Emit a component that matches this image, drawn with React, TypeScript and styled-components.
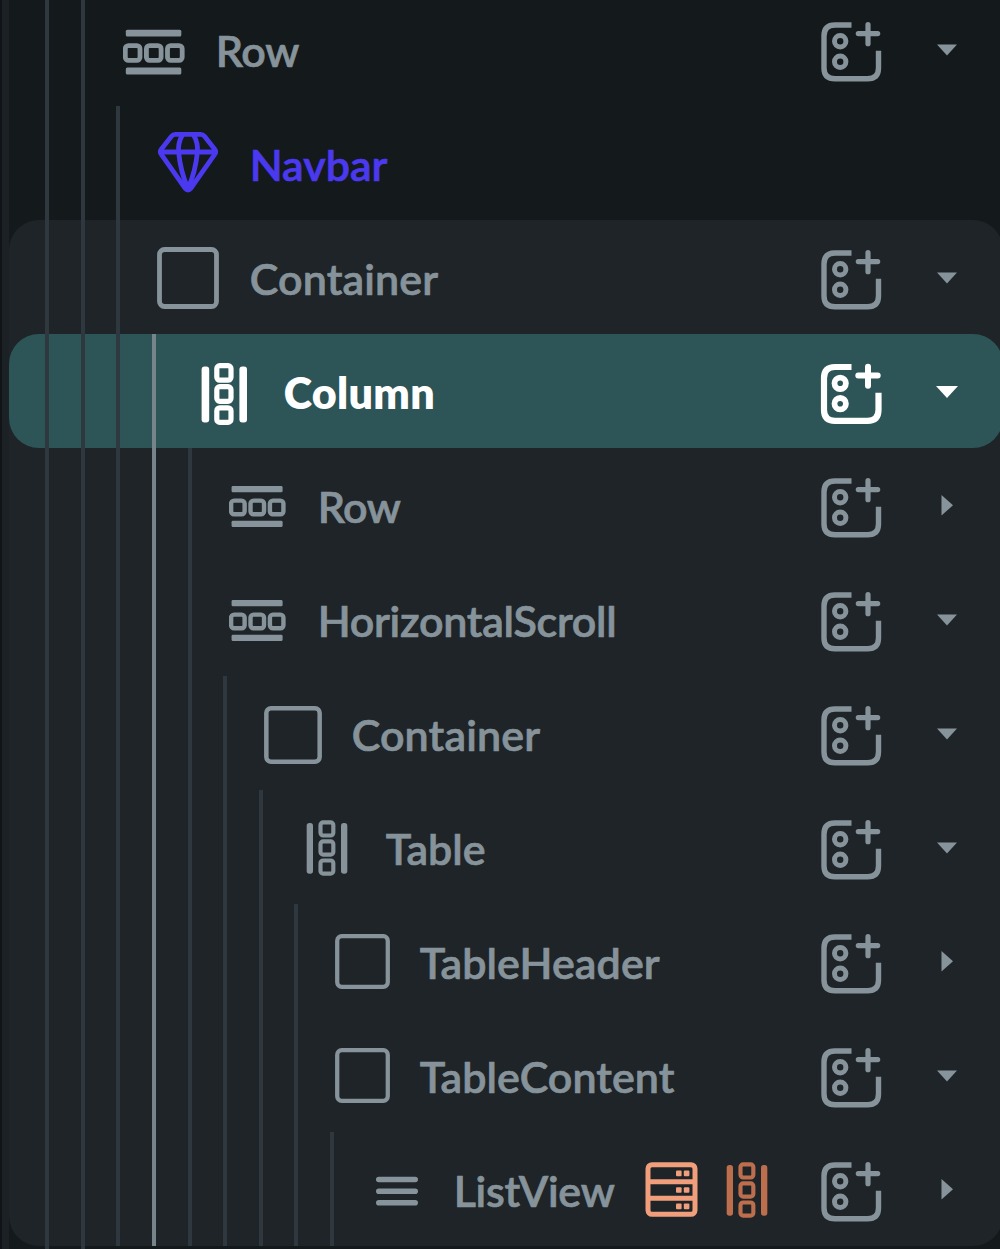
import React from "react";
import styled, { createGlobalStyle } from "styled-components";

const GlobalStyle = createGlobalStyle`
  * { box-sizing: border-box; }
  body { margin: 0; background: #14191b; }
`;

const MUTED = "#87939a";
const GUIDE_PITCH = 35.65;

const Panel = styled.main`
  width: 1000px;
  height: 1249px;
  overflow: hidden;
  background: #14191b;
  border-left: 2px solid #101416;
  display: flex;
`;

const Gutter = styled.div`
  flex: 0 0 7px;
  background: #1b2124;
`;

const Tree = styled.div`
  flex: 0 0 994px;
  display: flex;
  flex-direction: column;
  margin-top: -8px;
`;

const Group = styled.section`
  display: flex;
  flex-direction: column;
  background: #1e2427;
  border-radius: 30px;
`;

const RowBox = styled.div<{ $selected?: boolean }>`
  display: flex;
  align-items: center;
  height: 114px;
  flex: none;
  border-radius: 30px;
  color: ${(p) => (p.$selected ? "#ffffff" : MUTED)};
  background: ${(p) => (p.$selected ? "#2d5557" : "transparent")};
`;

const Guides = styled.div`
  display: flex;
  align-self: stretch;
  flex: none;
  padding-left: 36px;
  gap: ${GUIDE_PITCH - 4}px;
`;

const Guide = styled.span<{ $bright?: boolean }>`
  flex: 0 0 4px;
  background: ${(p) => (p.$bright ? "#75858a" : "#2e383e")};
`;

const IconSlot = styled.div<{ $width: number; $shift: number }>`
  width: ${(p) => p.$width}px;
  flex: none;
  display: flex;
  justify-content: center;
  padding-top: ${(p) => Math.max(0, p.$shift * 2)}px;
  padding-bottom: ${(p) => Math.max(0, -p.$shift * 2)}px;
  svg { display: block; flex: none; }
`;

const Label = styled.span<{ $gap: number; $bold?: boolean; $accent?: boolean; $tracking: number }>`
  margin-left: ${(p) => p.$gap}px;
  padding-top: 4px;
  font-family: Lato, "Open Sans", sans-serif;
  font-size: 43px;
  line-height: 52px;
  font-weight: ${(p) => (p.$bold ? 800 : 600)};
  letter-spacing: ${(p) => p.$tracking}px;
  color: ${(p) => (p.$accent ? "#4b39ef" : "inherit")};
  -webkit-text-stroke: ${(p) => (p.$bold ? "0" : "0.7px")} currentColor;
  white-space: nowrap;
`;

const Actions = styled.div`
  margin-left: auto;
  display: flex;
  align-items: center;
  flex: none;
  padding-right: 41.5px;
  gap: 50px;
  svg { display: block; }
`;

const AddButton = styled.button`
  border: 0;
  padding: 6px 0 0;
  background: none;
  color: inherit;
`;

const Toggle = styled.button`
  border: 0;
  padding: 1px 0 0;
  width: 30px;
  background: none;
  color: inherit;
  display: flex;
  justify-content: center;
`;

const Badges = styled.div`
  display: flex;
  align-items: center;
  flex: none;
  gap: 21px;
  margin-right: 45px;
  margin-left: auto;
  padding-top: 1px;
  svg { display: block; }
  & + ${Actions} { margin-left: 0; }
`;

const Footer = styled.div`
  display: flex;
  height: 12px;
`;

type IconProps = { size: number; heavy?: boolean; color?: string };

const RowIcon = ({ size }: IconProps) => (
  <svg width={size} height={size} viewBox="0 0 62 62" fill="none" stroke="currentColor">
    <g fill="currentColor" stroke="none">
      <rect x="2.8" y="8.8" width="55.5" height="6.8" rx="1.5" />
      <rect x="2.8" y="46.6" width="55.5" height="6.8" rx="1.5" />
    </g>
    {[2.3, 23.4, 44.5].map((x) => (
      <rect key={x} x={x} y="24.6" width="14.7" height="14.8" rx="3.2" strokeWidth="4.8" />
    ))}
  </svg>
);

const ColumnIcon = ({ size, heavy, color = "currentColor" }: IconProps) => (
  <svg width={size} height={size} viewBox="0 0 62 62" fill="none" stroke={color}>
    <g fill={color} stroke="none">
      <rect x={heavy ? 8.6 : 8.5} y="3.4" width={heavy ? 7.6 : 7} height="56" rx="3" />
      <rect x={heavy ? 46.4 : 46.5} y="3.4" width={heavy ? 7.6 : 7} height="56" rx="3" />
    </g>
    {[2.6, 23.7, 44.8].map((y) => (
      <rect key={y} x="23.8" y={y} width="14.2" height="14.6" rx="3" strokeWidth={heavy ? 5.2 : 4.6} />
    ))}
  </svg>
);

const BoxIcon = ({ size }: IconProps) => (
  <svg width={size} height={size} viewBox="0 0 62 62" fill="none" stroke="currentColor">
    <rect x="2.5" y="2.5" width="57" height="57" rx="5" strokeWidth="4.8" />
  </svg>
);

const DiamondIcon = ({ size }: IconProps) => (
  <svg
    width={size} height={size} viewBox="0 0 62 62" fill="none"
    stroke="#4b39ef" strokeWidth="4.8" strokeLinejoin="round" strokeLinecap="round"
  >
    <path d="M18.5 3.4H43.5Q46 3.4 47.5 5.2L57.7 18.2Q59.6 20.8 57.7 23.4L34 57.2Q31 60.8 28 57.2L4.3 23.4Q2.4 20.8 4.3 18.2L14.5 5.2Q16 3.4 18.5 3.4Z" />
    <path d="M3.5 21H58.5M25.5 3.8Q20.8 12 21.6 21Q23.5 41 31 57.5Q38.5 41 40.4 21Q41.2 12 36.5 3.8" />
  </svg>
);

const ListIcon = ({ size }: IconProps) => (
  <svg width={size} height={size} viewBox="0 0 54 54" stroke="currentColor" strokeWidth="5.6" strokeLinecap="round">
    <path d="M8.8 15.5H45.2M8.8 27.2H45.2M8.8 38.7H45.2" />
  </svg>
);

const DataIcon = () => (
  <svg width="53" height="55" viewBox="0 0 53 55" fill="none" stroke="#f09e7b" strokeWidth="5">
    <rect x="3" y="2.7" width="47" height="49.6" rx="4" />
    <path d="M3 19.8H50M3 36.2H50" />
    <g fill="#f09e7b" stroke="none">
      {[8.6, 25.2, 41.6].map((y) => (
        <React.Fragment key={y}>
          <rect x="31" y={y} width="5.6" height="5.6" rx="1" />
          <rect x="38.8" y={y} width="5.6" height="5.6" rx="1" />
        </React.Fragment>
      ))}
    </g>
  </svg>
);

const AddChildIcon = ({ heavy }: { heavy?: boolean }) => (
  <svg width="62" height="62" viewBox="0 0 62 62" fill="none" stroke="currentColor" strokeWidth={heavy ? 6.2 : 5.4}>
    <path d="M31.5 4H15Q4 4 4 15V47Q4 57.8 15 57.8H47.5Q58.5 57.8 58.5 47V29.7" />
    <path d="M38.3 12.6H57.7M48 3.7V22.7" strokeWidth={heavy ? 6 : 5.2} strokeLinecap="round" />
    <circle cx="20.2" cy="20.3" r="5.7" strokeWidth={heavy ? 5.8 : 5} />
    <circle cx="20.2" cy="40.7" r="5.7" strokeWidth={heavy ? 5.8 : 5} />
  </svg>
);

const Caret = ({ open, heavy }: { open: boolean; heavy?: boolean }) =>
  open ? (
    <svg width="22" height="12" viewBox="0 0 22 12" fill="currentColor">
      <path d={heavy ? "M0 0H22L11 12Z" : "M1 .5H21L11 11.5Z"} />
    </svg>
  ) : (
    <svg width="12" height="22" viewBox="0 0 12 22" fill="currentColor">
      <path d="M.5 0V20.5L12 10.3Z" />
    </svg>
  );

type Kind = "row" | "column" | "box" | "diamond" | "list";
const ICONS: Record<Kind, React.FC<IconProps>> = {
  row: RowIcon,
  column: ColumnIcon,
  box: BoxIcon,
  diamond: DiamondIcon,
  list: ListIcon,
};

type Node = {
  name: string;
  kind: Kind;
  depth: number;
  size: number;
  shift: number;
  tracking: number;
  open?: boolean;
  selected?: boolean;
  leaf?: boolean;
  bound?: boolean;
};

const OUTER: Node[] = [
  { name: "Row", kind: "row", depth: 0, size: 62, shift: 3, tracking: -0.3, open: true },
  { name: "Navbar", kind: "diamond", depth: 1, size: 62, shift: -1, tracking: 0, leaf: true },
];

const INNER: Node[] = [
  { name: "Container", kind: "box", depth: 1, size: 62, shift: 0.5, tracking: 0.15, open: true },
  { name: "Column", kind: "column", depth: 2, size: 62, shift: 3, tracking: 0.3, open: true, selected: true },
  { name: "Row", kind: "row", depth: 3, size: 57, shift: 1.5, tracking: -0.5 },
  { name: "HorizontalScroll", kind: "row", depth: 3, size: 57, shift: 1.5, tracking: -0.28, open: true },
  { name: "Container", kind: "box", depth: 4, size: 58, shift: 2, tracking: 0.15, open: true },
  { name: "Table", kind: "column", depth: 5, size: 56, shift: 0.5, tracking: 0, open: true },
  { name: "TableHeader", kind: "box", depth: 6, size: 55, shift: 0.5, tracking: 0.1 },
  { name: "TableContent", kind: "box", depth: 6, size: 55, shift: 0.5, tracking: 0.05, open: true },
  { name: "ListView", kind: "list", depth: 7, size: 54, shift: 1.5, tracking: -0.25, bound: true },
];

const TreeRow = ({ node, activeGuide }: { node: Node; activeGuide?: number }) => {
  const Icon = ICONS[node.kind];
  const count = node.depth + 2;
  const guidesEnd = 49 + GUIDE_PITCH * (count - 1);
  const center = (node.selected ? 154.5 : 153.6) + 34.75 * node.depth;
  const slot = 2 * (center - guidesEnd);
  const gap = 215.7 + 34 * node.depth - guidesEnd - slot;
  return (
    <RowBox $selected={node.selected}>
      <Guides>
        {Array.from({ length: count }, (_, i) => (
          <Guide key={i} $bright={i === activeGuide} />
        ))}
      </Guides>
      <IconSlot $width={slot} $shift={node.shift}>
        <Icon size={node.size} heavy={node.selected} />
      </IconSlot>
      <Label $gap={gap} $bold={node.selected} $accent={node.kind === "diamond"} $tracking={node.tracking}>
        {node.name}
      </Label>
      {node.bound && (
        <Badges>
          <DataIcon />
          <ColumnIcon size={56} color="#bd6e4c" />
        </Badges>
      )}
      {!node.leaf && (
        <Actions>
          <AddButton aria-label="Add child">
            <AddChildIcon heavy={node.selected} />
          </AddButton>
          <Toggle aria-label="Toggle">
            <Caret open={!!node.open} heavy={node.selected} />
          </Toggle>
        </Actions>
      )}
    </RowBox>
  );
};

export default function App() {
  return (
    <>
      <GlobalStyle />
      <Panel>
        <Gutter />
        <Tree>
          {OUTER.map((n, i) => (
            <TreeRow key={i} node={n} />
          ))}
          <Group>
            {INNER.map((n, i) => (
              <TreeRow key={i} node={n} activeGuide={i > 0 ? 3 : undefined} />
            ))}
          </Group>
          <Footer>
            <Guides>
              <Guide />
              <Guide />
            </Guides>
          </Footer>
        </Tree>
      </Panel>
    </>
  );
}
